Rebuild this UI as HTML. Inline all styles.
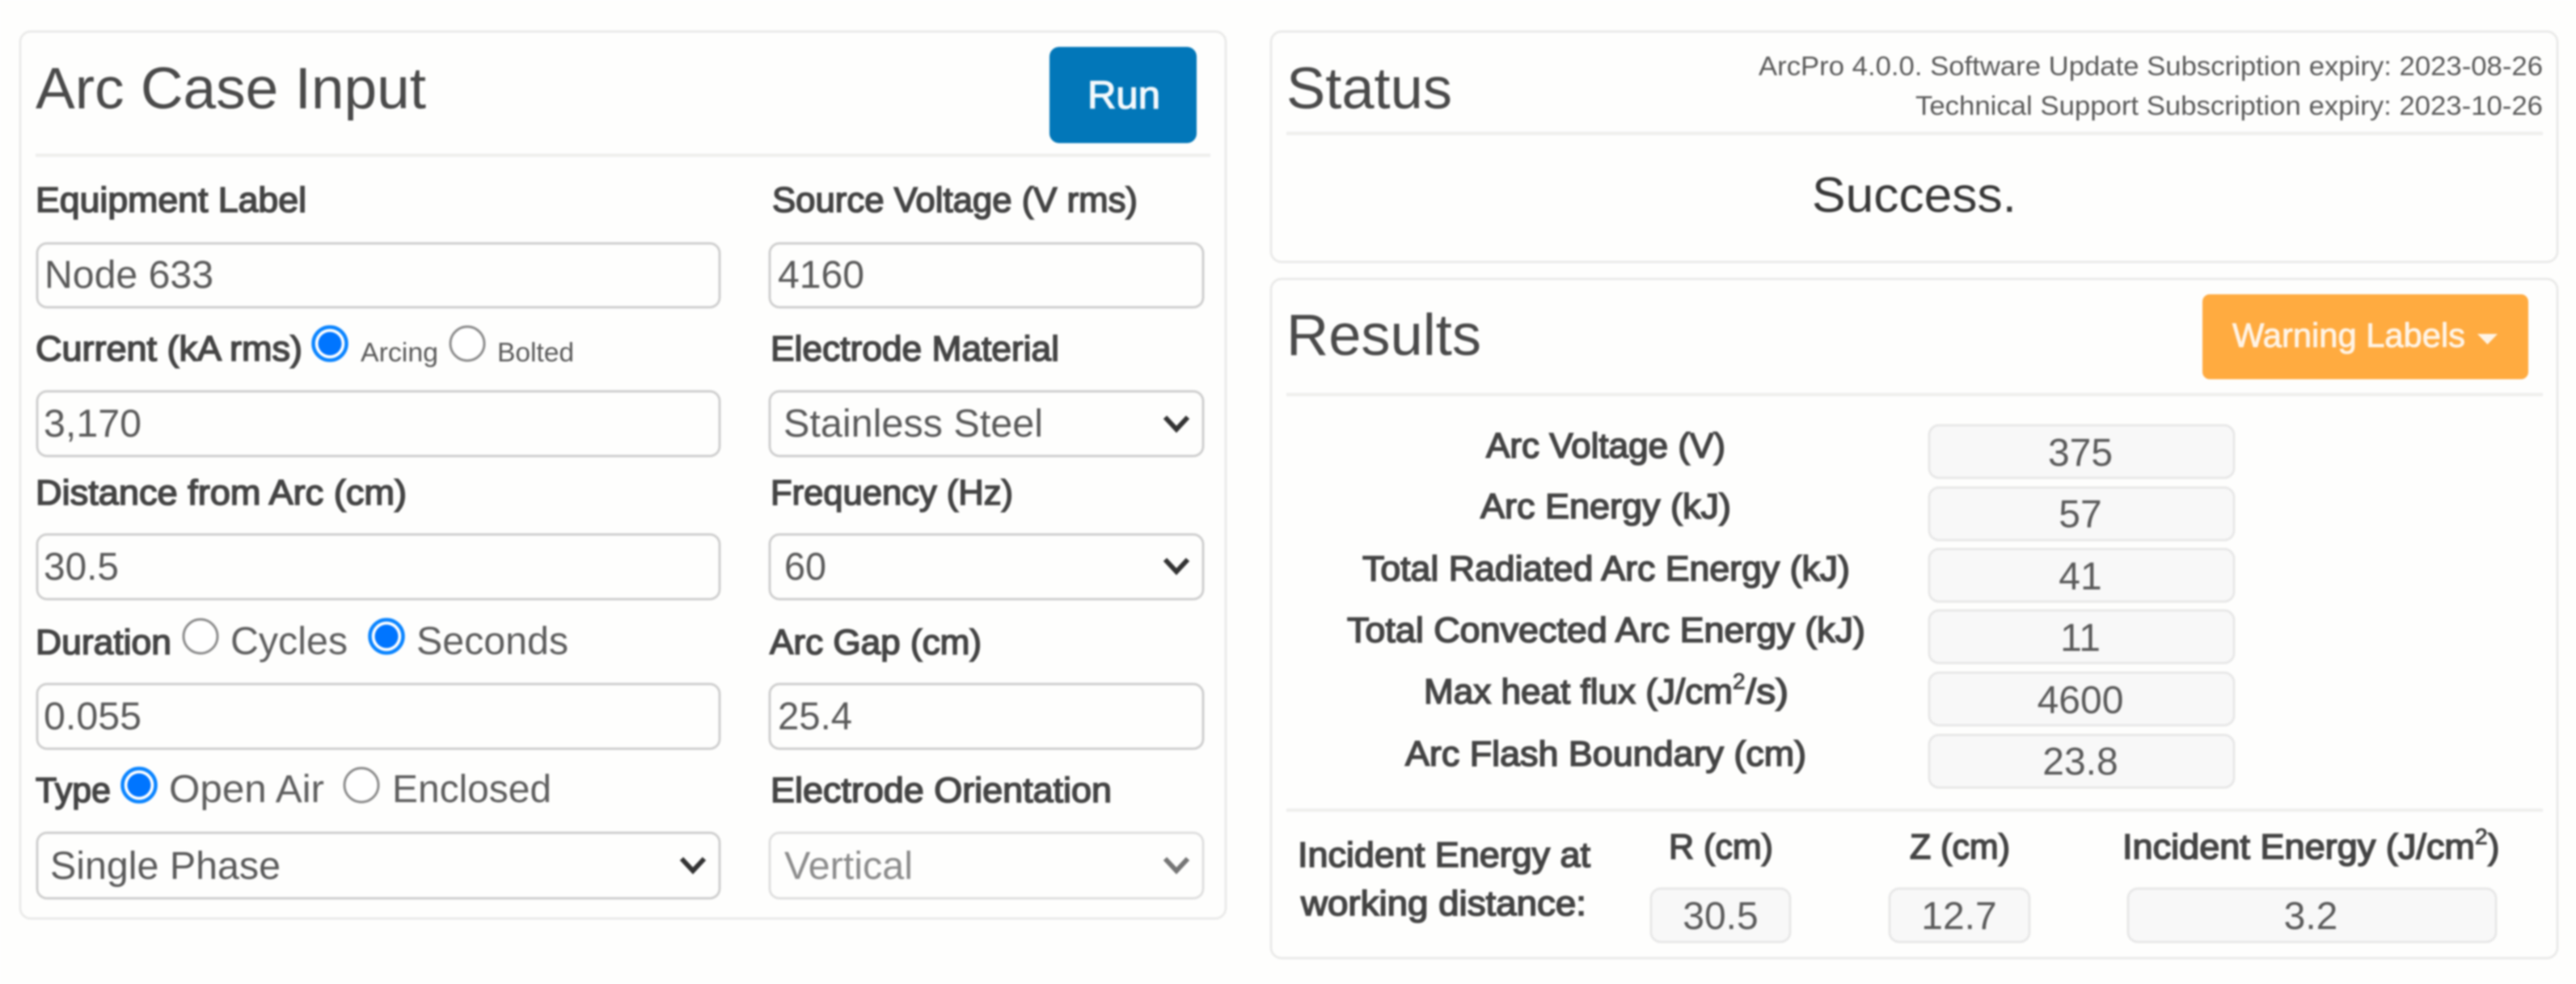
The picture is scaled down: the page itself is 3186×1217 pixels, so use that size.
<!DOCTYPE html>
<html lang="en">
<head>
<meta charset="utf-8">
<title>Arc Case Input</title>
<style>
html,body{margin:0;padding:0;background:#fefefd;width:3186px;height:1217px;overflow:hidden}
svg{display:block;filter:blur(1.1px)}
text{font-family:"Liberation Sans",Arial,sans-serif}
.h{font-size:72px;fill:#4a4a4a}
.l{font-size:43.2px;font-weight:400;fill:#444;stroke:#444;stroke-width:1.6px}
.sup{font-size:28px;font-weight:400;fill:#444;stroke:#444;stroke-width:1px}
.v{font-size:48px;fill:#5a5a5a}
.o{font-size:48px;fill:#5e5e5e}
.s{font-size:33.6px;fill:#5a5a5a}
.c{text-anchor:middle}
.panel{fill:#fefefd;stroke:#ebebea;stroke-width:3}
.inp{fill:#fefefd;stroke:#cfcfcf;stroke-width:3}
.out{fill:#f8f8f8;stroke:#e8e8e8;stroke-width:3}
.hr{fill:#eeeeed}
.chev{fill:none;stroke:#333;stroke-width:6}
.off{fill:#fff;stroke:#8c8c8c;stroke-width:3}
.on{fill:#fff;stroke:#0a84ff;stroke-width:4.5}
.dot{fill:#0075ff}
</style>
</head>
<body>
<svg xmlns="http://www.w3.org/2000/svg" width="3186" height="1217" viewBox="0 0 3186 1217">
<rect width="3186" height="1217" fill="#fefefd"/>

<!-- Arc Case Input panel -->
<rect class="panel" x="25" y="39" width="1491" height="1097" rx="13"/>
<text class="h" x="44" y="134" textLength="483" lengthAdjust="spacingAndGlyphs">Arc Case Input</text>
<rect x="1298" y="58" width="182" height="119" rx="12" fill="#0277b9"/>
<text x="1345" y="134" font-size="48" fill="#f4f9fc" textLength="90" lengthAdjust="spacingAndGlyphs" stroke="#f4f9fc" stroke-width="1.3">Run</text>
<rect class="hr" x="44" y="190" width="1453" height="4"/>

<!-- Left column -->
<text class="l" x="44" y="262" textLength="335" lengthAdjust="spacingAndGlyphs">Equipment Label</text>
<rect class="inp" x="46" y="301" width="844" height="79" rx="12"/>
<text class="v" x="55" y="356" textLength="209" lengthAdjust="spacingAndGlyphs">Node 633</text>

<text class="l" x="44" y="446" textLength="330" lengthAdjust="spacingAndGlyphs">Current (kA rms)</text>
<circle class="on" cx="408" cy="425" r="20.5"/><circle class="dot" cx="408" cy="425" r="14.5"/>
<text class="s" x="446" y="447" textLength="96" lengthAdjust="spacingAndGlyphs">Arcing</text>
<circle class="off" cx="578" cy="425" r="21"/>
<text class="s" x="615" y="447" textLength="95" lengthAdjust="spacingAndGlyphs">Bolted</text>
<rect class="inp" x="46" y="484" width="844" height="80" rx="12"/>
<text class="v" x="54" y="540" textLength="121" lengthAdjust="spacingAndGlyphs">3,170</text>

<text class="l" x="44" y="624" textLength="459" lengthAdjust="spacingAndGlyphs">Distance from Arc (cm)</text>
<rect class="inp" x="46" y="661" width="844" height="80" rx="12"/>
<text class="v" x="54" y="717" textLength="93" lengthAdjust="spacingAndGlyphs">30.5</text>

<text class="l" x="44" y="809" textLength="168" lengthAdjust="spacingAndGlyphs">Duration</text>
<circle class="off" cx="248" cy="787" r="21"/>
<text class="o" x="285" y="809" textLength="145" lengthAdjust="spacingAndGlyphs">Cycles</text>
<circle class="on" cx="478" cy="787" r="20.5"/><circle class="dot" cx="478" cy="787" r="14.5"/>
<text class="o" x="515" y="809" textLength="188" lengthAdjust="spacingAndGlyphs">Seconds</text>
<rect class="inp" x="46" y="846" width="844" height="80" rx="12"/>
<text class="v" x="54" y="902" textLength="121" lengthAdjust="spacingAndGlyphs">0.055</text>

<text class="l" x="44" y="992" textLength="93" lengthAdjust="spacingAndGlyphs">Type</text>
<circle class="on" cx="172" cy="971" r="20.5"/><circle class="dot" cx="172" cy="971" r="14.5"/>
<text class="o" x="209" y="992" textLength="192" lengthAdjust="spacingAndGlyphs">Open Air</text>
<circle class="off" cx="447" cy="971" r="21"/>
<text class="o" x="485" y="992" textLength="197" lengthAdjust="spacingAndGlyphs">Enclosed</text>
<rect class="inp" x="46" y="1030" width="844" height="81" rx="12"/>
<text class="v" x="62" y="1087" textLength="285" lengthAdjust="spacingAndGlyphs">Single Phase</text>
<polyline class="chev" points="843,1062 857,1077 871,1062"/>

<!-- Right column -->
<text class="l" x="955" y="262" textLength="452" lengthAdjust="spacingAndGlyphs">Source Voltage (V rms)</text>
<rect class="inp" x="952" y="301" width="536" height="79" rx="12"/>
<text class="v" x="962" y="356" textLength="107" lengthAdjust="spacingAndGlyphs">4160</text>

<text class="l" x="953" y="446" textLength="357" lengthAdjust="spacingAndGlyphs">Electrode Material</text>
<rect class="inp" x="952" y="484" width="536" height="80" rx="12"/>
<text class="v" x="969" y="540" textLength="321" lengthAdjust="spacingAndGlyphs">Stainless Steel</text>
<polyline class="chev" points="1441,516 1455,531 1469,516"/>

<text class="l" x="953" y="624" textLength="300" lengthAdjust="spacingAndGlyphs">Frequency (Hz)</text>
<rect class="inp" x="952" y="661" width="536" height="80" rx="12"/>
<text class="v" x="970" y="717" textLength="52" lengthAdjust="spacingAndGlyphs">60</text>
<polyline class="chev" points="1441,692 1455,707 1469,692"/>

<text class="l" x="952" y="809" textLength="262" lengthAdjust="spacingAndGlyphs">Arc Gap (cm)</text>
<rect class="inp" x="952" y="846" width="536" height="80" rx="12"/>
<text class="v" x="962" y="902" textLength="92" lengthAdjust="spacingAndGlyphs">25.4</text>

<text class="l" x="953" y="992" textLength="422" lengthAdjust="spacingAndGlyphs">Electrode Orientation</text>
<rect x="952" y="1030" width="536" height="81" rx="12" fill="#fefefd" stroke="#e0e0e0" stroke-width="3"/>
<text x="970" y="1087" font-size="48" fill="#8c8c8c" textLength="159" lengthAdjust="spacingAndGlyphs">Vertical</text>
<polyline points="1441,1062 1455,1077 1469,1062" fill="none" stroke="#757575" stroke-width="6"/>

<!-- Status panel -->
<rect class="panel" x="1572" y="39" width="1591" height="285" rx="13"/>
<text class="h" x="1591" y="134" textLength="205" lengthAdjust="spacingAndGlyphs">Status</text>
<text class="s" x="2175" y="93" textLength="970" lengthAdjust="spacingAndGlyphs">ArcPro 4.0.0. Software Update Subscription expiry: 2023-08-26</text>
<text class="s" x="2369" y="142" textLength="776" lengthAdjust="spacingAndGlyphs">Technical Support Subscription expiry: 2023-10-26</text>
<rect class="hr" x="1591" y="163" width="1554" height="4"/>
<text x="2241" y="262" font-size="61.6" fill="#383838" textLength="253" lengthAdjust="spacingAndGlyphs">Success.</text>

<!-- Results panel -->
<rect class="panel" x="1572" y="345" width="1591" height="840" rx="13"/>
<text class="h" x="1591" y="439" textLength="241" lengthAdjust="spacingAndGlyphs">Results</text>
<rect x="2724" y="364" width="403" height="105" rx="9" fill="#ffab40"/>
<text x="2761" y="429" font-size="42" fill="#fff4e6" textLength="288" lengthAdjust="spacingAndGlyphs" stroke="#fff4e6" stroke-width="0.9">Warning Labels</text>
<polygon points="3064,413 3089,413 3076.5,426" fill="#fff4e6"/>
<rect class="hr" x="1591" y="486" width="1554" height="4"/>

<text class="l" x="1838" y="566" textLength="296" lengthAdjust="spacingAndGlyphs">Arc Voltage (V)</text>
<text class="l" x="1831" y="641" textLength="310" lengthAdjust="spacingAndGlyphs">Arc Energy (kJ)</text>
<text class="l" x="1685" y="718" textLength="603" lengthAdjust="spacingAndGlyphs">Total Radiated Arc Energy (kJ)</text>
<text class="l" x="1666" y="794" textLength="641" lengthAdjust="spacingAndGlyphs">Total Convected Arc Energy (kJ)</text>
<text class="l" x="1761" y="870" textLength="382" lengthAdjust="spacingAndGlyphs">Max heat flux (J/cm</text>
<text class="sup" x="2143" y="852">2</text>
<text class="l" x="2159" y="870" textLength="53" lengthAdjust="spacingAndGlyphs">/s)</text>
<text class="l" x="1738" y="947" textLength="496" lengthAdjust="spacingAndGlyphs">Arc Flash Boundary (cm)</text>

<rect class="out" x="2386" y="526" width="377" height="65" rx="12"/>
<rect class="out" x="2386" y="603" width="377" height="65" rx="12"/>
<rect class="out" x="2386" y="679" width="377" height="65" rx="12"/>
<rect class="out" x="2386" y="755" width="377" height="65" rx="12"/>
<rect class="out" x="2386" y="832" width="377" height="65" rx="12"/>
<rect class="out" x="2386" y="909" width="377" height="65" rx="12"/>
<text class="v c" x="2573" y="576">375</text>
<text class="v c" x="2573" y="652">57</text>
<text class="v c" x="2573" y="729">41</text>
<text class="v c" x="2573" y="805">11</text>
<text class="v c" x="2573" y="882">4600</text>
<text class="v c" x="2573" y="958">23.8</text>

<rect class="hr" x="1591" y="1000" width="1554" height="4"/>
<text class="l" x="1605" y="1072" textLength="362" lengthAdjust="spacingAndGlyphs">Incident Energy at</text>
<text class="l" x="1609" y="1132" textLength="353" lengthAdjust="spacingAndGlyphs">working distance:</text>
<text class="l" x="2064" y="1062" textLength="129" lengthAdjust="spacingAndGlyphs">R (cm)</text>
<text class="l" x="2362" y="1062" textLength="124" lengthAdjust="spacingAndGlyphs">Z (cm)</text>
<text class="l" x="2625" y="1062" textLength="436" lengthAdjust="spacingAndGlyphs">Incident Energy (J/cm</text>
<text class="sup" x="3061" y="1044">2</text>
<text class="l" x="3077" y="1062">)</text>

<rect class="out" x="2042" y="1099" width="172" height="66" rx="12"/>
<rect class="out" x="2337" y="1099" width="173" height="66" rx="12"/>
<rect class="out" x="2632" y="1099" width="455" height="66" rx="12"/>
<text class="v c" x="2128" y="1149">30.5</text>
<text class="v c" x="2423" y="1149">12.7</text>
<text class="v c" x="2858" y="1149">3.2</text>
</svg>
</body>
</html>
